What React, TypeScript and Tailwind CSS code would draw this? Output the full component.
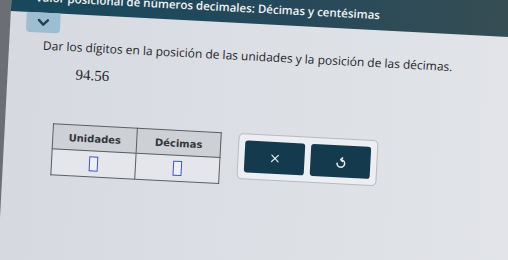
import { X } from "lucide-react";

function UndoIcon() {
  return (
    <svg width="11" height="13" viewBox="0 0 11 13" fill="none">
      <path
        d="M5.5 4.2 A3.8 3.8 0 1 1 1.7 8"
        stroke="#e6edf2"
        strokeWidth="1.5"
        strokeLinecap="round"
      />
      <path
        d="M7 2.4 L5.2 4.2 L7 6"
        stroke="#e6edf2"
        strokeWidth="1.5"
        strokeLinecap="round"
        strokeLinejoin="round"
      />
    </svg>
  );
}

function BlankBox() {
  return <div className="w-[9px] h-[15px] border-[1.5px] border-[#3d52d6] bg-[#eef0f6]" />;
}

export default function App() {
  return (
    <div className="w-[508px] h-[260px] overflow-hidden bg-[#6b6f73]">
      <div className="ml-[13px] -mt-[30px] w-[560px] h-[400px] rotate-[3deg] origin-top-left bg-gradient-to-r from-[#d6dae0] to-[#e3e5e9] font-['Open_Sans',sans-serif]">
        {/* header */}
        <div className="h-[41px] bg-gradient-to-r from-[#17485c] via-[#25495a] to-[#3b4e51] pt-[19px] pl-[24px]">
          <p className="text-[11.5px] leading-[14px] font-semibold text-[#f1f4f6] whitespace-nowrap">
            Valor posicional de números decimales: Décimas y centésimas
          </p>
        </div>

        <div className="ml-[16px] w-[34px] h-[20px] rounded-b-[4px] bg-[#9dbdd0] flex items-center justify-center">
          <svg width="12" height="8" viewBox="0 0 12 8" fill="none">
            <path d="M1.5 1.5 L6 6 L10.5 1.5" stroke="#203f58" strokeWidth="2.4" strokeLinecap="round" strokeLinejoin="round" />
          </svg>
        </div>

        <p className="ml-[34px] mt-[5px] text-[12px] leading-[15px] text-[#222428] whitespace-nowrap">
          Dar los dígitos en la posición de las unidades y la posición de las décimas.
        </p>

        <p className="ml-[68px] mt-[11px] font-['Liberation_Serif',serif] text-[15px] leading-[18px] text-[#25282c]">
          94.56
        </p>

        <div className="mt-[41px] ml-[48px] flex items-start gap-[17px]">
          <table className="border-collapse border border-[#5a5d61] font-['DejaVu_Sans',sans-serif] text-[10px]">
            <thead>
              <tr className="bg-[#cdd0d5] h-[25px]">
                <th className="w-[84px] border border-[#5a5d61] font-bold text-[#33363a]">Unidades</th>
                <th className="w-[84px] border border-[#5a5d61] font-bold text-[#33363a]">Décimas</th>
              </tr>
            </thead>
            <tbody>
              <tr className="bg-[#e4e6eb] h-[26px]">
                <td className="border border-[#5a5d61]">
                  <div className="flex justify-center"><BlankBox /></div>
                </td>
                <td className="border border-[#5a5d61]">
                  <div className="flex justify-center"><BlankBox /></div>
                </td>
              </tr>
            </tbody>
          </table>

          <div className="w-[140px] h-[46px] rounded-[5px] border border-[#b7babf] bg-[#eceef1] p-[6px] flex gap-[6px]">
            <button className="flex-1 rounded-[3px] bg-[#133a4d] flex items-center justify-center">
              <X size={13} strokeWidth={2.2} color="#e6edf2" />
            </button>
            <button className="flex-1 rounded-[3px] bg-[#143b4d] flex items-center justify-center">
              <UndoIcon />
            </button>
          </div>
        </div>
      </div>
    </div>
  );
}
